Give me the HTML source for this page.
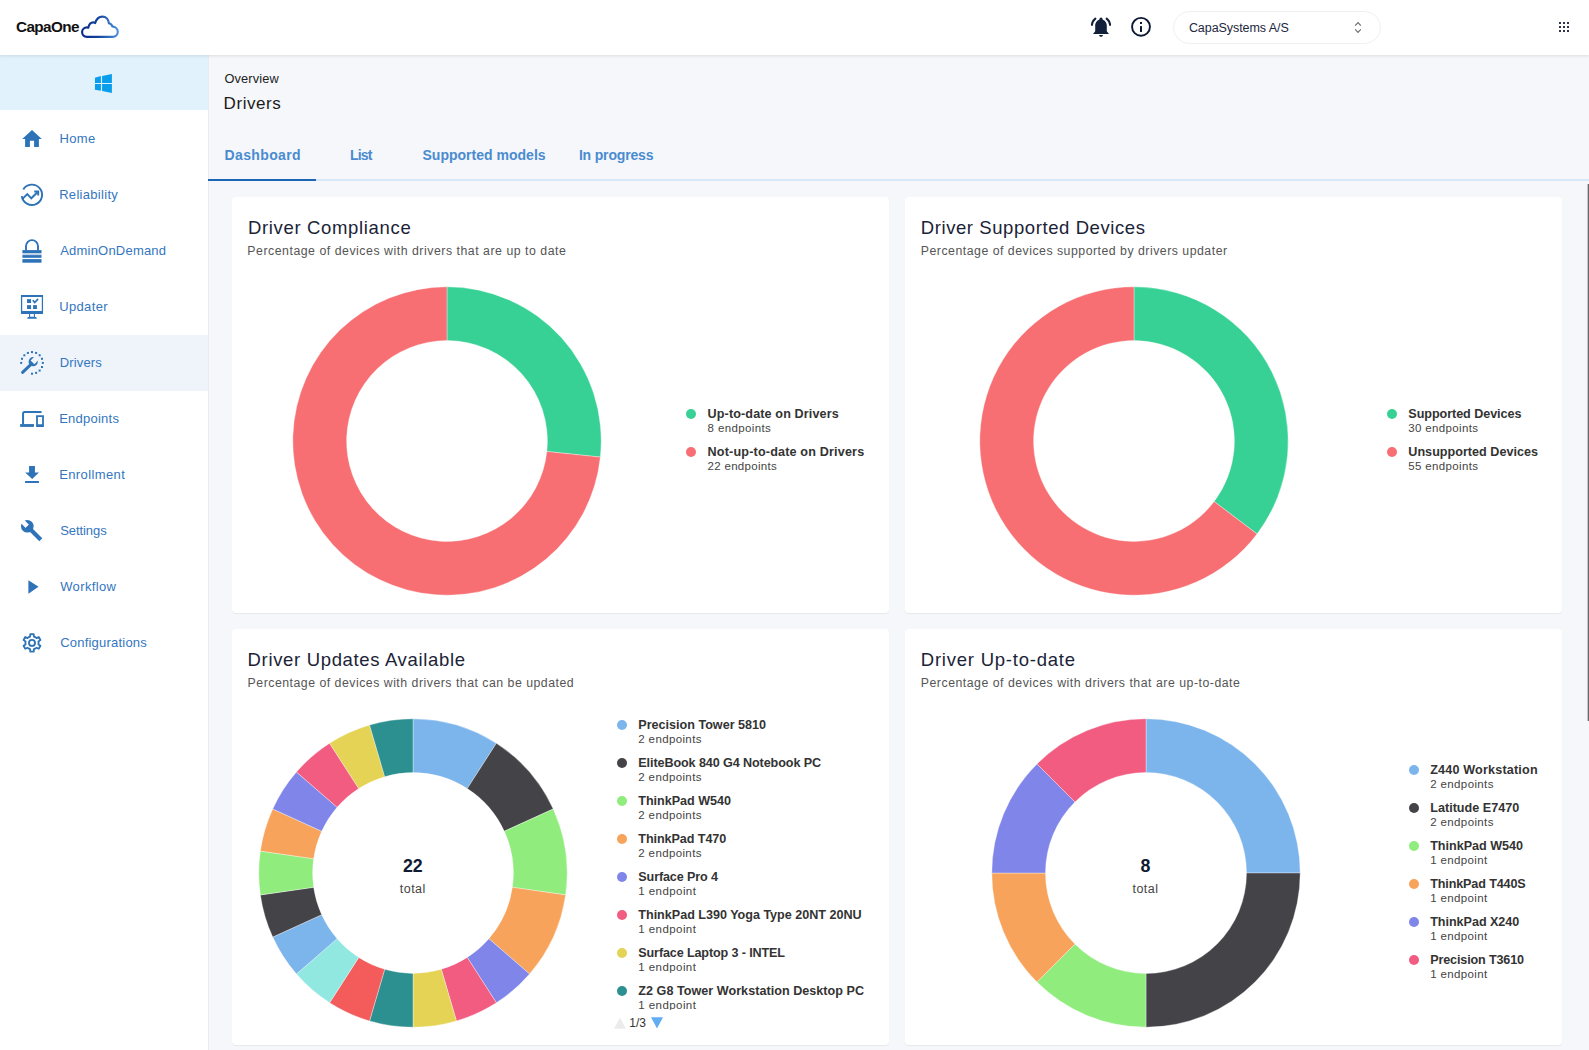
<!DOCTYPE html>
<html><head><meta charset="utf-8"><title>CapaOne Drivers</title>
<style>html,body{margin:0;padding:0;width:1589px;height:1050px;overflow:hidden;font-family:"Liberation Sans", sans-serif;}</style>
</head><body>
<div style="position:relative;width:1589px;height:1050px;overflow:hidden">
<div style="position:absolute;left:0px;top:0px;width:1589px;height:1050px;background:#f5f7fa"></div>
<div style="position:absolute;left:0px;top:55px;width:208px;height:995px;background:#ffffff"></div>
<div style="position:absolute;left:208px;top:55px;width:1px;height:995px;background:#e9ebee"></div>
<div style="position:absolute;left:0px;top:55px;width:208px;height:55px;background:#e1f2fd"></div>
<div style="position:absolute;left:0px;top:335px;width:208px;height:56px;background:#eef4fa"></div>
<div style="position:absolute;left:0px;top:0px;width:1589px;height:55px;background:#ffffff;box-shadow:0 1px 3px rgba(0,0,0,0.11)"></div>
<div style="position:absolute;left:16.00px;top:19.25px;font-size:15.3px;line-height:15.3px;color:#111;font-weight:700;letter-spacing:-0.608px;white-space:nowrap;">CapaOne</div>
<svg style="position:absolute;left:78px;top:12px" width="44" height="30" viewBox="0 0 44 30">
<defs><linearGradient id="cg" x1="0" y1="0" x2="1" y2="0"><stop offset="0" stop-color="#082a86"/><stop offset="0.45" stop-color="#11439e"/><stop offset="1" stop-color="#4a90d8"/></linearGradient></defs>
<path d="M9 24.9 C5.8 24.9 4.1 22.6 4.1 20.1 C4.1 17.4 6.3 15.4 9 15.4 C9.5 15.4 9.9 15.5 10.3 15.7 C11 12.4 13 10.4 15.3 10.4 C16 10.4 16.6 10.6 17.1 11.2 C18.5 6.8 21.2 4.6 24.4 4.6 C28 4.6 30.6 7.5 30.9 11.3 C32.6 11.6 33.8 12.8 34.3 14.4 C37.6 14.8 39.8 17.2 39.8 19.8 C39.8 22.8 37.6 24.9 34.6 24.9 Z" fill="none" stroke="url(#cg)" stroke-width="2.1" stroke-linejoin="round"/>
</svg>
<svg style="position:absolute;left:1086px;top:13px" width="30" height="30" viewBox="0 0 30 30">
<path d="M15 6.6 C11.4 6.6 9.2 9.5 9.2 13 L9.2 18.2 L7 20.9 L23 20.9 L20.8 18.2 L20.8 13 C20.8 9.5 18.6 6.6 15 6.6 Z" fill="#13203b"/>
<circle cx="15" cy="6.2" r="1.6" fill="#13203b"/>
<path d="M13.1 22 L16.9 22 C16.9 23.2 16 23.8 15 23.8 C14 23.8 13.1 23.2 13.1 22 Z" fill="#13203b"/>
<path d="M9.4 5.6 C7.3 7.2 6.1 9.4 5.9 11.9" stroke="#13203b" stroke-width="2" fill="none" stroke-linecap="round"/>
<path d="M20.6 5.6 C22.7 7.2 23.9 9.4 24.1 11.9" stroke="#13203b" stroke-width="2" fill="none" stroke-linecap="round"/>
</svg>
<svg style="position:absolute;left:1126px;top:13px" width="30" height="30" viewBox="0 0 30 30">
<circle cx="15" cy="13.8" r="8.95" fill="none" stroke="#0d1833" stroke-width="1.9"/>
<rect x="14" y="9" width="2" height="2" fill="#0d1833"/>
<rect x="14" y="13.1" width="2" height="5.9" fill="#0d1833"/>
</svg>
<div style="position:absolute;left:1173px;top:10.5px;width:207.5px;height:33px;background:#fff;border:1px solid #eff0f3;border-radius:17px;box-sizing:border-box"></div>
<div style="position:absolute;left:1188.90px;top:21.82px;font-size:12.5px;line-height:12.5px;color:#1c2840;font-weight:400;letter-spacing:-0.064px;white-space:nowrap;">CapaSystems A/S</div>
<svg style="position:absolute;left:1353px;top:20px" width="10" height="15" viewBox="0 0 10 15">
<path d="M2.2 5.6 L5 2.6 L7.8 5.6" stroke="#6b6b6b" stroke-width="1.15" fill="none"/>
<path d="M2.2 9.4 L5 12.4 L7.8 9.4" stroke="#6b6b6b" stroke-width="1.15" fill="none"/>
</svg>
<div style="position:absolute;left:1558.8px;top:21.8px;width:2.6px;height:2.6px;background:#0a1128;border-radius:0.7px"></div>
<div style="position:absolute;left:1558.8px;top:25.8px;width:2.6px;height:2.6px;background:#0a1128;border-radius:0.7px"></div>
<div style="position:absolute;left:1558.8px;top:29.8px;width:2.6px;height:2.6px;background:#0a1128;border-radius:0.7px"></div>
<div style="position:absolute;left:1562.8px;top:21.8px;width:2.6px;height:2.6px;background:#0a1128;border-radius:0.7px"></div>
<div style="position:absolute;left:1562.8px;top:25.8px;width:2.6px;height:2.6px;background:#0a1128;border-radius:0.7px"></div>
<div style="position:absolute;left:1562.8px;top:29.8px;width:2.6px;height:2.6px;background:#0a1128;border-radius:0.7px"></div>
<div style="position:absolute;left:1566.8px;top:21.8px;width:2.6px;height:2.6px;background:#0a1128;border-radius:0.7px"></div>
<div style="position:absolute;left:1566.8px;top:25.8px;width:2.6px;height:2.6px;background:#0a1128;border-radius:0.7px"></div>
<div style="position:absolute;left:1566.8px;top:29.8px;width:2.6px;height:2.6px;background:#0a1128;border-radius:0.7px"></div>
<svg style="position:absolute;left:90px;top:70px" width="26" height="26" viewBox="0 0 26 26">
<path d="M4.95 7.7 L10.9 6.1 L10.9 12.9 L4.95 12.9 Z M12.1 5.9 L21.9 4 L21.9 12.9 L12.1 12.9 Z M4.95 14.1 L10.9 14.1 L10.9 20.8 L4.95 19.8 Z M12.1 14.1 L21.9 14.1 L21.9 22.9 L12.1 21 Z" fill="#089eec"/>
</svg>
<div style="position:absolute;left:59.50px;top:132.00px;font-size:13px;line-height:13px;color:#3476c0;font-weight:400;letter-spacing:0.318px;white-space:nowrap;">Home</div>
<div style="position:absolute;left:59.20px;top:188.00px;font-size:13px;line-height:13px;color:#3476c0;font-weight:400;letter-spacing:0.297px;white-space:nowrap;">Reliability</div>
<div style="position:absolute;left:60.20px;top:244.00px;font-size:13px;line-height:13px;color:#3476c0;font-weight:400;letter-spacing:0.209px;white-space:nowrap;">AdminOnDemand</div>
<div style="position:absolute;left:59.20px;top:300.00px;font-size:13px;line-height:13px;color:#3476c0;font-weight:400;letter-spacing:0.363px;white-space:nowrap;">Updater</div>
<div style="position:absolute;left:59.80px;top:356.00px;font-size:13px;line-height:13px;color:#3476c0;font-weight:400;letter-spacing:0.139px;white-space:nowrap;">Drivers</div>
<div style="position:absolute;left:59.20px;top:412.00px;font-size:13px;line-height:13px;color:#3476c0;font-weight:400;letter-spacing:0.235px;white-space:nowrap;">Endpoints</div>
<div style="position:absolute;left:59.20px;top:468.00px;font-size:13px;line-height:13px;color:#3476c0;font-weight:400;letter-spacing:0.386px;white-space:nowrap;">Enrollment</div>
<div style="position:absolute;left:60.20px;top:524.00px;font-size:13px;line-height:13px;color:#3476c0;font-weight:400;letter-spacing:-0.068px;white-space:nowrap;">Settings</div>
<div style="position:absolute;left:60.20px;top:580.00px;font-size:13px;line-height:13px;color:#3476c0;font-weight:400;letter-spacing:0.368px;white-space:nowrap;">Workflow</div>
<div style="position:absolute;left:60.20px;top:636.00px;font-size:13px;line-height:13px;color:#3476c0;font-weight:400;letter-spacing:0.213px;white-space:nowrap;">Configurations</div>
<svg style="position:absolute;left:20px;top:127px;overflow:visible" width="24" height="24" viewBox="0 0 24 24"><path d="M12 2.9 L2.2 11.9 L5.1 11.9 L5.1 19.9 L9.9 19.9 L9.9 13.7 L14.1 13.7 L14.1 19.9 L18.9 19.9 L18.9 11.9 L21.8 11.9 Z" fill="#2e72b8"/></svg>
<svg style="position:absolute;left:20px;top:183px;overflow:visible" width="24" height="24" viewBox="0 0 24 24"><path d="M3.29 6.42 A10.15 10.15 0 1 1 1.83 13.04" fill="none" stroke="#2e72b8" stroke-width="1.9"/><path d="M2.2 16.2 L7.3 11.1 L11.3 15.3 L17.4 9.3" fill="none" stroke="#2e72b8" stroke-width="1.9"/><path d="M14.2 8.5 L18.2 8.5 L18.2 12.6" fill="none" stroke="#2e72b8" stroke-width="1.9"/></svg>
<svg style="position:absolute;left:20px;top:239px;overflow:visible" width="24" height="24" viewBox="0 0 24 24"><path d="M6 11.5 L6 7.1 A6 6 0 0 1 18 7.1 L18 11.5" fill="none" stroke="#2e72b8" stroke-width="1.9"/><rect x="2.4" y="11.1" width="19.1" height="2.9" fill="#2e72b8"/><rect x="2.4" y="14" width="19.1" height="2.1" fill="#2e72b8" opacity="0.3"/><rect x="2.4" y="16.1" width="19.1" height="2.7" fill="#2e72b8"/><rect x="2.4" y="20.1" width="19.1" height="3.6" fill="#2e72b8"/></svg>
<svg style="position:absolute;left:20px;top:295px;overflow:visible" width="24" height="24" viewBox="0 0 24 24"><path d="M0.93 0 L23.07 0 L23.07 18.9 L0.93 18.9 Z M2.2 2 L2.2 16.1 L21.8 16.1 L21.8 2 Z" fill="#2e72b8" fill-rule="evenodd"/><rect x="7.07" y="4.13" width="4" height="3.9" fill="#2e72b8"/><rect x="7.07" y="10.13" width="4" height="3.9" fill="#2e72b8"/><rect x="13.07" y="10.13" width="3.85" height="3.9" fill="#2e72b8"/><path d="M13.2 5.7 L14.7 7.5 L17.7 4.4" fill="none" stroke="#2e72b8" stroke-width="1.7" stroke-linecap="round"/><path d="M9.6 18.9 L9.6 22.3 L14.4 22.3 L14.4 18.9" fill="none" stroke="#2e72b8" stroke-width="1.1"/><path d="M8 22 L16 22 L17.1 23.7 L7 23.7 Z" fill="#2e72b8"/></svg>
<svg style="position:absolute;left:20px;top:351px;overflow:visible" width="24" height="24" viewBox="0 0 24 24"><rect x="11.00" y="0.10" width="2" height="2" fill="#2e72b8"/><rect x="15.13" y="0.92" width="2" height="2" fill="#2e72b8"/><rect x="18.64" y="3.26" width="2" height="2" fill="#2e72b8"/><rect x="20.98" y="6.77" width="2" height="2" fill="#2e72b8"/><rect x="21.80" y="10.90" width="2" height="2" fill="#2e72b8"/><rect x="20.98" y="15.03" width="2" height="2" fill="#2e72b8"/><rect x="18.64" y="18.54" width="2" height="2" fill="#2e72b8"/><rect x="15.13" y="20.88" width="2" height="2" fill="#2e72b8"/><rect x="11.00" y="21.70" width="2" height="2" fill="#2e72b8"/><rect x="0.20" y="10.90" width="2" height="2" fill="#2e72b8"/><rect x="1.02" y="6.77" width="2" height="2" fill="#2e72b8"/><rect x="3.36" y="3.26" width="2" height="2" fill="#2e72b8"/><rect x="6.87" y="0.92" width="2" height="2" fill="#2e72b8"/><defs><mask id="wm1"><rect x="0" y="0" width="24" height="24" fill="#fff"/><path d="M10.6 9.4 L14.4 13.2 L21 6.6 L17.2 2.8 Z" fill="#000"/></mask></defs><g mask="url(#wm1)"><circle cx="13.2" cy="10.7" r="4.6" fill="#2e72b8"/></g><path d="M2.6 21.4 L11.5 12.9" stroke="#2e72b8" stroke-width="2.9" stroke-linecap="round"/></svg>
<svg style="position:absolute;left:20px;top:407px;overflow:visible" width="24" height="24" viewBox="0 0 24 24"><path d="M3.07 17.5 L3.07 6.5 Q3.07 4.93 4.6 4.93 L21.5 4.93" fill="none" stroke="#2e72b8" stroke-width="2"/><rect x="0.13" y="17.07" width="13.8" height="2.83" fill="#2e72b8"/><path d="M16.1 8.13 L23.9 8.13 L23.9 19.9 L16.1 19.9 Z M17.9 9.9 L17.9 17.2 L22.1 17.2 L22.1 9.9 Z" fill="#2e72b8" fill-rule="evenodd"/></svg>
<svg style="position:absolute;left:20px;top:463px;overflow:visible" width="24" height="24" viewBox="0 0 24 24"><path d="M9.07 3.07 L14.93 3.07 L14.93 9.47 L18.93 9.47 L12.2 15.9 L5.2 9.47 L9.07 9.47 Z" fill="#2e72b8"/><rect x="5.07" y="18" width="13.86" height="2" fill="#2e72b8"/></svg>
<svg style="position:absolute;left:20px;top:519px;overflow:visible" width="24" height="24" viewBox="0 0 24 24"><defs><mask id="wm2"><rect x="-2" y="-2" width="28" height="28" fill="#fff"/><path d="M5.7 9 L9 5.7 L2.6 -0.7 L-0.7 2.6 Z" fill="#000"/></mask></defs><g mask="url(#wm2)"><circle cx="7.3" cy="7.3" r="6.3" fill="#2e72b8"/></g><path d="M7.3 7.3 L20.8 20.8" stroke="#2e72b8" stroke-width="4.2"/></svg>
<svg style="position:absolute;left:20px;top:575px;overflow:visible" width="24" height="24" viewBox="0 0 24 24"><path d="M8.4 5.2 L18.53 11.87 L8.4 18.8 Z" fill="#2e72b8"/></svg>
<svg style="position:absolute;left:20px;top:631px;overflow:visible" width="24" height="24" viewBox="0 0 24 24"><path d="M8.70 6.18 L10.07 5.59 L10.30 3.16 L13.70 3.16 L13.93 5.59 L15.30 6.18 L15.30 6.18 L16.50 7.07 L18.72 6.06 L20.42 9.00 L18.43 10.42 L18.60 11.90 L18.60 11.90 L18.43 13.38 L20.42 14.80 L18.72 17.74 L16.50 16.73 L15.30 17.62 L15.30 17.62 L13.93 18.21 L13.70 20.64 L10.30 20.64 L10.07 18.21 L8.70 17.62 L8.70 17.62 L7.50 16.73 L5.28 17.74 L3.58 14.80 L5.57 13.38 L5.40 11.90 L5.40 11.90 L5.57 10.42 L3.58 9.00 L5.28 6.06 L7.50 7.07 L8.70 6.18 Z" fill="none" stroke="#2e72b8" stroke-width="1.85" stroke-linejoin="round"/><circle cx="12" cy="11.9" r="3.0" fill="none" stroke="#2e72b8" stroke-width="1.85"/></svg>
<div style="position:absolute;left:224.40px;top:73.16px;font-size:12.8px;line-height:12.8px;color:#222;font-weight:400;letter-spacing:0.159px;white-space:nowrap;">Overview</div>
<div style="position:absolute;left:223.60px;top:95.21px;font-size:17px;line-height:17px;color:#1b1b1b;font-weight:400;letter-spacing:0.562px;white-space:nowrap;">Drivers</div>
<div style="position:absolute;left:208px;top:179px;width:1381px;height:2px;background:#d8e8fb"></div>
<div style="position:absolute;left:208px;top:179px;width:108px;height:2px;background:#1c66b4"></div>
<div style="position:absolute;left:224.60px;top:148.15px;font-size:14px;line-height:14px;color:#4a8bd0;font-weight:700;letter-spacing:0.353px;white-space:nowrap;">Dashboard</div>
<div style="position:absolute;left:350.00px;top:148.15px;font-size:14px;line-height:14px;color:#4a8bd0;font-weight:700;letter-spacing:-0.843px;white-space:nowrap;">List</div>
<div style="position:absolute;left:422.50px;top:148.15px;font-size:14px;line-height:14px;color:#4a8bd0;font-weight:700;letter-spacing:0.013px;white-space:nowrap;">Supported models</div>
<div style="position:absolute;left:578.90px;top:148.15px;font-size:14px;line-height:14px;color:#4a8bd0;font-weight:700;letter-spacing:-0.166px;white-space:nowrap;">In progress</div>
<div style="position:absolute;left:1587px;top:184px;width:1px;height:537px;background:#c4c4c4"></div>
<div style="position:absolute;left:1588px;top:184px;width:1px;height:537px;background:#6a6a6a"></div>
<div style="position:absolute;left:232px;top:197px;width:657px;height:416px;background:#fff;border-radius:4px;box-shadow:0 1px 1px rgba(0,0,0,0.06)"></div>
<div style="position:absolute;left:905px;top:197px;width:657px;height:416px;background:#fff;border-radius:4px;box-shadow:0 1px 1px rgba(0,0,0,0.06)"></div>
<div style="position:absolute;left:232px;top:629px;width:657px;height:416px;background:#fff;border-radius:4px;box-shadow:0 1px 1px rgba(0,0,0,0.06)"></div>
<div style="position:absolute;left:905px;top:629px;width:657px;height:416px;background:#fff;border-radius:4px;box-shadow:0 1px 1px rgba(0,0,0,0.06)"></div>
<div style="position:absolute;left:248.00px;top:218.64px;font-size:18.5px;line-height:18.5px;color:#1b2337;font-weight:400;letter-spacing:0.658px;white-space:nowrap;">Driver Compliance</div>
<div style="position:absolute;left:247.30px;top:245.39px;font-size:12.3px;line-height:12.3px;color:#555;font-weight:400;letter-spacing:0.529px;white-space:nowrap;">Percentage of devices with drivers that are up to date</div>
<div style="position:absolute;left:920.80px;top:218.64px;font-size:18.5px;line-height:18.5px;color:#1b2337;font-weight:400;letter-spacing:0.581px;white-space:nowrap;">Driver Supported Devices</div>
<div style="position:absolute;left:920.80px;top:245.39px;font-size:12.3px;line-height:12.3px;color:#555;font-weight:400;letter-spacing:0.503px;white-space:nowrap;">Percentage of devices supported by drivers updater</div>
<div style="position:absolute;left:247.60px;top:650.64px;font-size:18.5px;line-height:18.5px;color:#1b2337;font-weight:400;letter-spacing:0.658px;white-space:nowrap;">Driver Updates Available</div>
<div style="position:absolute;left:247.60px;top:677.39px;font-size:12.3px;line-height:12.3px;color:#555;font-weight:400;letter-spacing:0.503px;white-space:nowrap;">Percentage of devices with drivers that can be updated</div>
<div style="position:absolute;left:920.80px;top:650.64px;font-size:18.5px;line-height:18.5px;color:#1b2337;font-weight:400;letter-spacing:0.770px;white-space:nowrap;">Driver Up-to-date</div>
<div style="position:absolute;left:920.80px;top:677.39px;font-size:12.3px;line-height:12.3px;color:#555;font-weight:400;letter-spacing:0.513px;white-space:nowrap;">Percentage of devices with drivers that are up-to-date</div>
<svg style="position:absolute;left:287.3px;top:281.3px" width="320" height="320" viewBox="287.3 281.3 320 320"><path d="M447.300 287.100 A154.2 154.2 0 0 1 600.655 457.418 L547.150 451.795 A100.4 100.4 0 0 0 447.300 340.900 Z" fill="#37d195" stroke="#fff" stroke-width="0.35" stroke-linejoin="round"/><path d="M600.655 457.418 A154.2 154.2 0 1 1 447.300 287.100 L447.300 340.900 A100.4 100.4 0 1 0 547.150 451.795 Z" fill="#f76f72" stroke="#fff" stroke-width="0.35" stroke-linejoin="round"/></svg>
<svg style="position:absolute;left:974.3px;top:281.3px" width="320" height="320" viewBox="974.3 281.3 320 320"><path d="M1134.300 287.100 A154.2 154.2 0 0 1 1257.354 534.226 L1214.421 501.805 A100.4 100.4 0 0 0 1134.300 340.900 Z" fill="#37d195" stroke="#fff" stroke-width="0.35" stroke-linejoin="round"/><path d="M1257.354 534.226 A154.2 154.2 0 1 1 1134.300 287.100 L1134.300 340.900 A100.4 100.4 0 1 0 1214.421 501.805 Z" fill="#f76f72" stroke="#fff" stroke-width="0.35" stroke-linejoin="round"/></svg>
<svg style="position:absolute;left:252.7px;top:713.3px" width="320" height="320" viewBox="252.7 713.3 320 320"><path d="M412.700 719.100 A154.2 154.2 0 0 1 496.067 743.579 L466.980 788.838 A100.4 100.4 0 0 0 412.700 772.900 Z" fill="#7cb5ec" stroke="#fff" stroke-width="0.35" stroke-linejoin="round"/><path d="M496.067 743.579 A154.2 154.2 0 0 1 552.965 809.243 L504.027 831.592 A100.4 100.4 0 0 0 466.980 788.838 Z" fill="#434348" stroke="#fff" stroke-width="0.35" stroke-linejoin="round"/><path d="M552.965 809.243 A154.2 154.2 0 0 1 565.330 895.245 L512.078 887.588 A100.4 100.4 0 0 0 504.027 831.592 Z" fill="#90ed7d" stroke="#fff" stroke-width="0.35" stroke-linejoin="round"/><path d="M565.330 895.245 A154.2 154.2 0 0 1 529.237 974.280 L488.577 939.048 A100.4 100.4 0 0 0 512.078 887.588 Z" fill="#f7a35c" stroke="#fff" stroke-width="0.35" stroke-linejoin="round"/><path d="M529.237 974.280 A154.2 154.2 0 0 1 496.067 1003.021 L466.980 957.762 A100.4 100.4 0 0 0 488.577 939.048 Z" fill="#8085e9" stroke="#fff" stroke-width="0.35" stroke-linejoin="round"/><path d="M496.067 1003.021 A154.2 154.2 0 0 1 456.143 1021.254 L440.986 969.633 A100.4 100.4 0 0 0 466.980 957.762 Z" fill="#f15c80" stroke="#fff" stroke-width="0.35" stroke-linejoin="round"/><path d="M456.143 1021.254 A154.2 154.2 0 0 1 412.700 1027.500 L412.700 973.700 A100.4 100.4 0 0 0 440.986 969.633 Z" fill="#e4d354" stroke="#fff" stroke-width="0.35" stroke-linejoin="round"/><path d="M412.700 1027.500 A154.2 154.2 0 0 1 369.257 1021.254 L384.414 969.633 A100.4 100.4 0 0 0 412.700 973.700 Z" fill="#2b908f" stroke="#fff" stroke-width="0.35" stroke-linejoin="round"/><path d="M369.257 1021.254 A154.2 154.2 0 0 1 329.333 1003.021 L358.420 957.762 A100.4 100.4 0 0 0 384.414 969.633 Z" fill="#f45b5b" stroke="#fff" stroke-width="0.35" stroke-linejoin="round"/><path d="M329.333 1003.021 A154.2 154.2 0 0 1 296.163 974.280 L336.823 939.048 A100.4 100.4 0 0 0 358.420 957.762 Z" fill="#91e8e1" stroke="#fff" stroke-width="0.35" stroke-linejoin="round"/><path d="M296.163 974.280 A154.2 154.2 0 0 1 272.435 937.357 L321.373 915.008 A100.4 100.4 0 0 0 336.823 939.048 Z" fill="#7cb5ec" stroke="#fff" stroke-width="0.35" stroke-linejoin="round"/><path d="M272.435 937.357 A154.2 154.2 0 0 1 260.070 895.245 L313.322 887.588 A100.4 100.4 0 0 0 321.373 915.008 Z" fill="#434348" stroke="#fff" stroke-width="0.35" stroke-linejoin="round"/><path d="M260.070 895.245 A154.2 154.2 0 0 1 260.070 851.355 L313.322 859.012 A100.4 100.4 0 0 0 313.322 887.588 Z" fill="#90ed7d" stroke="#fff" stroke-width="0.35" stroke-linejoin="round"/><path d="M260.070 851.355 A154.2 154.2 0 0 1 272.435 809.243 L321.373 831.592 A100.4 100.4 0 0 0 313.322 859.012 Z" fill="#f7a35c" stroke="#fff" stroke-width="0.35" stroke-linejoin="round"/><path d="M272.435 809.243 A154.2 154.2 0 0 1 296.163 772.320 L336.823 807.552 A100.4 100.4 0 0 0 321.373 831.592 Z" fill="#8085e9" stroke="#fff" stroke-width="0.35" stroke-linejoin="round"/><path d="M296.163 772.320 A154.2 154.2 0 0 1 329.333 743.579 L358.420 788.838 A100.4 100.4 0 0 0 336.823 807.552 Z" fill="#f15c80" stroke="#fff" stroke-width="0.35" stroke-linejoin="round"/><path d="M329.333 743.579 A154.2 154.2 0 0 1 369.257 725.346 L384.414 776.967 A100.4 100.4 0 0 0 358.420 788.838 Z" fill="#e4d354" stroke="#fff" stroke-width="0.35" stroke-linejoin="round"/><path d="M369.257 725.346 A154.2 154.2 0 0 1 412.700 719.100 L412.700 772.900 A100.4 100.4 0 0 0 384.414 776.967 Z" fill="#2b908f" stroke="#fff" stroke-width="0.35" stroke-linejoin="round"/></svg>
<svg style="position:absolute;left:985.5px;top:713.3px" width="320" height="320" viewBox="985.5 713.3 320 320"><path d="M1145.500 719.100 A154.2 154.2 0 0 1 1299.700 873.300 L1246.000 873.300 A100.5 100.5 0 0 0 1145.500 772.800 Z" fill="#7cb5ec" stroke="#fff" stroke-width="0.35" stroke-linejoin="round"/><path d="M1299.700 873.300 A154.2 154.2 0 0 1 1145.500 1027.500 L1145.500 973.800 A100.5 100.5 0 0 0 1246.000 873.300 Z" fill="#434348" stroke="#fff" stroke-width="0.35" stroke-linejoin="round"/><path d="M1145.500 1027.500 A154.2 154.2 0 0 1 1036.464 982.336 L1074.436 944.364 A100.5 100.5 0 0 0 1145.500 973.800 Z" fill="#90ed7d" stroke="#fff" stroke-width="0.35" stroke-linejoin="round"/><path d="M1036.464 982.336 A154.2 154.2 0 0 1 991.300 873.300 L1045.000 873.300 A100.5 100.5 0 0 0 1074.436 944.364 Z" fill="#f7a35c" stroke="#fff" stroke-width="0.35" stroke-linejoin="round"/><path d="M991.300 873.300 A154.2 154.2 0 0 1 1036.464 764.264 L1074.436 802.236 A100.5 100.5 0 0 0 1045.000 873.300 Z" fill="#8085e9" stroke="#fff" stroke-width="0.35" stroke-linejoin="round"/><path d="M1036.464 764.264 A154.2 154.2 0 0 1 1145.500 719.100 L1145.500 772.800 A100.5 100.5 0 0 0 1074.436 802.236 Z" fill="#f15c80" stroke="#fff" stroke-width="0.35" stroke-linejoin="round"/></svg>
<div style="position:absolute;left:112.80px;width:600px;text-align:center;top:858.03px;font-size:17.8px;line-height:17.8px;color:#0f1a33;font-weight:700;letter-spacing:0.000px;white-space:nowrap;">22</div>
<div style="position:absolute;left:112.80px;width:600px;text-align:center;top:882.72px;font-size:12.5px;line-height:12.5px;color:#444;font-weight:400;letter-spacing:0.450px;white-space:nowrap;">total</div>
<div style="position:absolute;left:845.50px;width:600px;text-align:center;top:858.03px;font-size:17.8px;line-height:17.8px;color:#0f1a33;font-weight:700;letter-spacing:0.000px;white-space:nowrap;">8</div>
<div style="position:absolute;left:845.50px;width:600px;text-align:center;top:882.72px;font-size:12.5px;line-height:12.5px;color:#444;font-weight:400;letter-spacing:0.450px;white-space:nowrap;">total</div>
<div style="position:absolute;left:686px;top:408.8px;width:10px;height:10px;background:#37d195;border-radius:50%"></div>
<div style="position:absolute;left:707.60px;top:408.13px;font-size:12.6px;line-height:12.6px;color:#333;font-weight:700;letter-spacing:0.118px;white-space:nowrap;">Up-to-date on Drivers</div>
<div style="position:absolute;left:707.60px;top:422.57px;font-size:11.5px;line-height:11.5px;color:#444;font-weight:400;letter-spacing:0.368px;white-space:nowrap;">8 endpoints</div>
<div style="position:absolute;left:686px;top:446.8px;width:10px;height:10px;background:#f76f72;border-radius:50%"></div>
<div style="position:absolute;left:707.60px;top:446.13px;font-size:12.6px;line-height:12.6px;color:#333;font-weight:700;letter-spacing:0.170px;white-space:nowrap;">Not-up-to-date on Drivers</div>
<div style="position:absolute;left:707.60px;top:460.57px;font-size:11.5px;line-height:11.5px;color:#444;font-weight:400;letter-spacing:0.299px;white-space:nowrap;">22 endpoints</div>
<div style="position:absolute;left:1387px;top:408.8px;width:10px;height:10px;background:#37d195;border-radius:50%"></div>
<div style="position:absolute;left:1408.30px;top:408.13px;font-size:12.6px;line-height:12.6px;color:#333;font-weight:700;letter-spacing:-0.061px;white-space:nowrap;">Supported Devices</div>
<div style="position:absolute;left:1408.30px;top:422.57px;font-size:11.5px;line-height:11.5px;color:#444;font-weight:400;letter-spacing:0.344px;white-space:nowrap;">30 endpoints</div>
<div style="position:absolute;left:1387px;top:446.8px;width:10px;height:10px;background:#f76f72;border-radius:50%"></div>
<div style="position:absolute;left:1408.30px;top:446.13px;font-size:12.6px;line-height:12.6px;color:#333;font-weight:700;letter-spacing:0.013px;white-space:nowrap;">Unsupported Devices</div>
<div style="position:absolute;left:1408.30px;top:460.57px;font-size:11.5px;line-height:11.5px;color:#444;font-weight:400;letter-spacing:0.344px;white-space:nowrap;">55 endpoints</div>
<div style="position:absolute;left:616.7px;top:720.3px;width:10px;height:10px;background:#7cb5ec;border-radius:50%"></div>
<div style="position:absolute;left:638.30px;top:718.63px;font-size:12.6px;line-height:12.6px;color:#333;font-weight:700;letter-spacing:-0.008px;white-space:nowrap;">Precision Tower 5810</div>
<div style="position:absolute;left:638.30px;top:734.07px;font-size:11.5px;line-height:11.5px;color:#444;font-weight:400;letter-spacing:0.368px;white-space:nowrap;">2 endpoints</div>
<div style="position:absolute;left:616.7px;top:758.3px;width:10px;height:10px;background:#434348;border-radius:50%"></div>
<div style="position:absolute;left:638.30px;top:756.63px;font-size:12.6px;line-height:12.6px;color:#333;font-weight:700;letter-spacing:-0.098px;white-space:nowrap;">EliteBook 840 G4 Notebook PC</div>
<div style="position:absolute;left:638.30px;top:772.07px;font-size:11.5px;line-height:11.5px;color:#444;font-weight:400;letter-spacing:0.368px;white-space:nowrap;">2 endpoints</div>
<div style="position:absolute;left:616.7px;top:796.3px;width:10px;height:10px;background:#90ed7d;border-radius:50%"></div>
<div style="position:absolute;left:638.30px;top:794.63px;font-size:12.6px;line-height:12.6px;color:#333;font-weight:700;letter-spacing:-0.031px;white-space:nowrap;">ThinkPad W540</div>
<div style="position:absolute;left:638.30px;top:810.07px;font-size:11.5px;line-height:11.5px;color:#444;font-weight:400;letter-spacing:0.368px;white-space:nowrap;">2 endpoints</div>
<div style="position:absolute;left:616.7px;top:834.3px;width:10px;height:10px;background:#f7a35c;border-radius:50%"></div>
<div style="position:absolute;left:638.30px;top:832.63px;font-size:12.6px;line-height:12.6px;color:#333;font-weight:700;letter-spacing:-0.073px;white-space:nowrap;">ThinkPad T470</div>
<div style="position:absolute;left:638.30px;top:848.07px;font-size:11.5px;line-height:11.5px;color:#444;font-weight:400;letter-spacing:0.368px;white-space:nowrap;">2 endpoints</div>
<div style="position:absolute;left:616.7px;top:872.3px;width:10px;height:10px;background:#8085e9;border-radius:50%"></div>
<div style="position:absolute;left:638.30px;top:870.63px;font-size:12.6px;line-height:12.6px;color:#333;font-weight:700;letter-spacing:-0.124px;white-space:nowrap;">Surface Pro 4</div>
<div style="position:absolute;left:638.30px;top:886.07px;font-size:11.5px;line-height:11.5px;color:#444;font-weight:400;letter-spacing:0.431px;white-space:nowrap;">1 endpoint</div>
<div style="position:absolute;left:616.7px;top:910.3px;width:10px;height:10px;background:#f15c80;border-radius:50%"></div>
<div style="position:absolute;left:638.30px;top:908.63px;font-size:12.6px;line-height:12.6px;color:#333;font-weight:700;letter-spacing:-0.022px;white-space:nowrap;">ThinkPad L390 Yoga Type 20NT 20NU</div>
<div style="position:absolute;left:638.30px;top:924.07px;font-size:11.5px;line-height:11.5px;color:#444;font-weight:400;letter-spacing:0.431px;white-space:nowrap;">1 endpoint</div>
<div style="position:absolute;left:616.7px;top:948.3px;width:10px;height:10px;background:#e4d354;border-radius:50%"></div>
<div style="position:absolute;left:638.30px;top:946.63px;font-size:12.6px;line-height:12.6px;color:#333;font-weight:700;letter-spacing:-0.133px;white-space:nowrap;">Surface Laptop 3 - INTEL</div>
<div style="position:absolute;left:638.30px;top:962.07px;font-size:11.5px;line-height:11.5px;color:#444;font-weight:400;letter-spacing:0.431px;white-space:nowrap;">1 endpoint</div>
<div style="position:absolute;left:616.7px;top:986.3px;width:10px;height:10px;background:#2b908f;border-radius:50%"></div>
<div style="position:absolute;left:638.30px;top:984.63px;font-size:12.6px;line-height:12.6px;color:#333;font-weight:700;letter-spacing:0.028px;white-space:nowrap;">Z2 G8 Tower Workstation Desktop PC</div>
<div style="position:absolute;left:638.30px;top:1000.07px;font-size:11.5px;line-height:11.5px;color:#444;font-weight:400;letter-spacing:0.431px;white-space:nowrap;">1 endpoint</div>
<div style="position:absolute;left:600px;top:1010px;width:280px;height:6px;background:#fff"></div>
<div style="position:absolute;left:1409.2px;top:764.9px;width:10px;height:10px;background:#7cb5ec;border-radius:50%"></div>
<div style="position:absolute;left:1430.20px;top:764.23px;font-size:12.6px;line-height:12.6px;color:#333;font-weight:700;letter-spacing:0.177px;white-space:nowrap;">Z440 Workstation</div>
<div style="position:absolute;left:1430.20px;top:778.67px;font-size:11.5px;line-height:11.5px;color:#444;font-weight:400;letter-spacing:0.378px;white-space:nowrap;">2 endpoints</div>
<div style="position:absolute;left:1409.2px;top:802.9px;width:10px;height:10px;background:#434348;border-radius:50%"></div>
<div style="position:absolute;left:1430.20px;top:802.23px;font-size:12.6px;line-height:12.6px;color:#333;font-weight:700;letter-spacing:0.017px;white-space:nowrap;">Latitude E7470</div>
<div style="position:absolute;left:1430.20px;top:816.67px;font-size:11.5px;line-height:11.5px;color:#444;font-weight:400;letter-spacing:0.378px;white-space:nowrap;">2 endpoints</div>
<div style="position:absolute;left:1409.2px;top:840.9px;width:10px;height:10px;background:#90ed7d;border-radius:50%"></div>
<div style="position:absolute;left:1430.20px;top:840.23px;font-size:12.6px;line-height:12.6px;color:#333;font-weight:700;letter-spacing:-0.023px;white-space:nowrap;">ThinkPad W540</div>
<div style="position:absolute;left:1430.20px;top:854.67px;font-size:11.5px;line-height:11.5px;color:#444;font-weight:400;letter-spacing:0.364px;white-space:nowrap;">1 endpoint</div>
<div style="position:absolute;left:1409.2px;top:878.9px;width:10px;height:10px;background:#f7a35c;border-radius:50%"></div>
<div style="position:absolute;left:1430.20px;top:878.23px;font-size:12.6px;line-height:12.6px;color:#333;font-weight:700;letter-spacing:-0.137px;white-space:nowrap;">ThinkPad T440S</div>
<div style="position:absolute;left:1430.20px;top:892.67px;font-size:11.5px;line-height:11.5px;color:#444;font-weight:400;letter-spacing:0.364px;white-space:nowrap;">1 endpoint</div>
<div style="position:absolute;left:1409.2px;top:916.9px;width:10px;height:10px;background:#8085e9;border-radius:50%"></div>
<div style="position:absolute;left:1430.20px;top:916.23px;font-size:12.6px;line-height:12.6px;color:#333;font-weight:700;letter-spacing:-0.040px;white-space:nowrap;">ThinkPad X240</div>
<div style="position:absolute;left:1430.20px;top:930.67px;font-size:11.5px;line-height:11.5px;color:#444;font-weight:400;letter-spacing:0.364px;white-space:nowrap;">1 endpoint</div>
<div style="position:absolute;left:1409.2px;top:954.9px;width:10px;height:10px;background:#f15c80;border-radius:50%"></div>
<div style="position:absolute;left:1430.20px;top:954.23px;font-size:12.6px;line-height:12.6px;color:#333;font-weight:700;letter-spacing:-0.143px;white-space:nowrap;">Precision T3610</div>
<div style="position:absolute;left:1430.20px;top:968.67px;font-size:11.5px;line-height:11.5px;color:#444;font-weight:400;letter-spacing:0.364px;white-space:nowrap;">1 endpoint</div>
<svg style="position:absolute;left:614px;top:1017px" width="12" height="12" viewBox="0 0 12 12"><path d="M0 11.7 L6 0.4 L12 11.7 Z" fill="#ececec"/></svg>
<div style="position:absolute;left:629.30px;top:1016.84px;font-size:12px;line-height:12px;color:#333;font-weight:400;letter-spacing:0.000px;white-space:nowrap;">1/3</div>
<svg style="position:absolute;left:651px;top:1017px" width="13" height="12" viewBox="0 0 13 12"><path d="M0 0.2 L12 0.2 L6 11.5 Z" fill="#62acf2"/></svg>
</div></body></html>
